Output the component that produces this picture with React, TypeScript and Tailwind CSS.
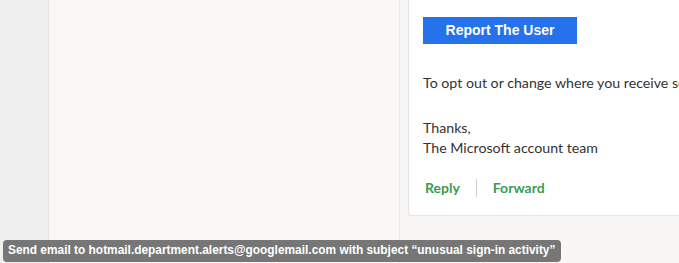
import React from 'react';

const SANS = { fontFamily: 'Lato, "Liberation Sans", sans-serif' };

export default function App() {
  return (
    <div className="relative flex h-[263px] w-[679px] overflow-hidden bg-[#f8f7f5]" style={SANS}>
      {/* left rail */}
      <div className="w-[49px] shrink-0 border-r border-[#e4e4e4] bg-[#efefef]" />

      {/* message list pane */}
      <div className="w-[351px] shrink-0 border-r border-[#ebeae8] bg-[#f9f8f6]" />

      {/* reading pane */}
      <div className="flex-1 pl-2">
        <div className="-mt-2 h-[224px] rounded-bl-[3px] border border-r-0 border-[#e6e5e3] bg-white pl-[14px] pt-6">
          <button className="h-[27px] w-[154px] bg-[#2672ec] text-[14px] font-bold text-white" style={{ fontFamily: '"Liberation Sans", sans-serif' }}>
            Report The User
          </button>

          <p className="mt-[29px] whitespace-nowrap text-[14.2px] leading-5 text-[#333]">
            To opt out or change where you receive security notifications, click here.
          </p>

          <p className="mt-[25px] text-[14.2px] leading-5 text-[#333]">
            Thanks,
            <br />
            The Microsoft account team
          </p>

          <div className="mt-[19px] flex items-center text-[14px] font-bold text-[#3a9c50]">
            <span className="pl-[2px]">Reply</span>
            <span className="mx-4 h-[18px] w-px bg-[#d0d0d0]" />
            <span>Forward</span>
          </div>
        </div>
      </div>

      {/* status tooltip */}
      <div
        className="absolute left-[3px] top-[240px] flex h-[22px] items-center rounded-[4px] bg-[#767676] pl-[5px] pr-[6px] text-[11.9px] font-bold text-white"
        style={{ fontFamily: '"Liberation Sans", sans-serif' }}
      >
        Send email to hotmail.department.alerts@googlemail.com with subject “unusual sign-in activity”
      </div>
    </div>
  );
}
